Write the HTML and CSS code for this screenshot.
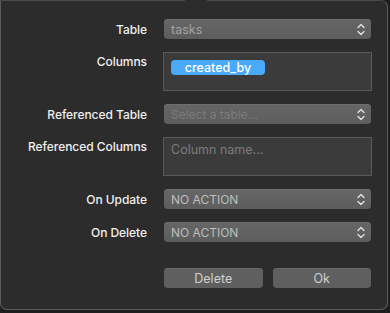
FILE: index.html
```html
<!DOCTYPE html>
<html>
<head>
<meta charset="utf-8">
<link rel="stylesheet" href="styles.css">
</head>
<body>
<div class="popover">
  <div class="arrow"></div>
  <div class="form">
    <div class="label">Table</div>
    <div class="select"><span class="value dim">tasks</span><svg class="chev" width="8" height="13" viewBox="0 0 8 13"><path d="M1 4.5 L4 1.5 L7 4.5 M1 8.5 L4 11.5 L7 8.5" fill="none" stroke="#e6e6e6" stroke-width="1.3" stroke-linecap="round" stroke-linejoin="round"/></svg></div>

    <div class="label top">Columns</div>
    <div class="box"><span class="token">created_by</span></div>

    <div class="label">Referenced Table</div>
    <div class="select"><span class="value placeholder">Select a table...</span><svg class="chev" width="8" height="13" viewBox="0 0 8 13"><path d="M1 4.5 L4 1.5 L7 4.5 M1 8.5 L4 11.5 L7 8.5" fill="none" stroke="#e6e6e6" stroke-width="1.3" stroke-linecap="round" stroke-linejoin="round"/></svg></div>

    <div class="label top">Referenced Columns</div>
    <div class="box"><span class="placeholder-text">Column name...</span></div>

    <div class="label">On Update</div>
    <div class="select"><span class="value">NO ACTION</span><svg class="chev" width="8" height="13" viewBox="0 0 8 13"><path d="M1 4.5 L4 1.5 L7 4.5 M1 8.5 L4 11.5 L7 8.5" fill="none" stroke="#e6e6e6" stroke-width="1.3" stroke-linecap="round" stroke-linejoin="round"/></svg></div>

    <div class="label">On Delete</div>
    <div class="select"><span class="value">NO ACTION</span><svg class="chev" width="8" height="13" viewBox="0 0 8 13"><path d="M1 4.5 L4 1.5 L7 4.5 M1 8.5 L4 11.5 L7 8.5" fill="none" stroke="#e6e6e6" stroke-width="1.3" stroke-linecap="round" stroke-linejoin="round"/></svg></div>

    <div class="buttons">
      <button class="btn">Delete</button>
      <button class="btn">Ok</button>
    </div>
  </div>
</div>
</body>
</html>
```
FILE: styles.css
```css
html, body {
  margin: 0;
  padding: 0;
  background: #1e1e1e;
  width: 390px;
  height: 313px;
  overflow: hidden;
  font-family: Inter, "Liberation Sans", sans-serif;
}
.popover {
  position: relative;
  box-sizing: border-box;
  width: 388px;
  height: 310px;
  background: #2c2c2c;
  border: 1px solid #5c5c5c;
  border-top-color: #4a4a4a;
  border-radius: 0 7px 7px 7px;
  padding: 18px 0 0 0;
}
.arrow {
  position: absolute;
  top: -1px;
  left: 184px;
  width: 22px;
  height: 1px;
  background: #2c2c2c;
}
.form {
  display: grid;
  grid-template-columns: 146px 207px;
  column-gap: 17px;
  row-gap: 13px;
  align-items: center;
}
.label {
  text-align: right;
  color: #f0f0f0;
  font-size: 12px;
  font-weight: 500;
  letter-spacing: -0.05px;
}
.label.top {
  align-self: start;
  padding-top: 2px;
}
.select {
  box-sizing: border-box;
  height: 20px;
  border-radius: 4px;
  background: linear-gradient(#666666, #5d5d5d);
  display: flex;
  align-items: center;
  justify-content: space-between;
  padding: 0 6px 0 7px;
  box-shadow: inset 0 0.5px 0 #747474;
}
.value {
  font-size: 12px;
  color: #bdbdbd;
}
.value.dim {
  color: #a3a3a3;
  font-size: 12.5px;
}
.value.placeholder {
  color: #7c7c7c;
}
.chev {
  display: block;
}
.box {
  box-sizing: border-box;
  height: 39px;
  background: #3b3b3b;
  border: 1px solid #595959;
  margin-left: -1px;
  margin-right: -1px;
  padding: 3px 7px;
}
.token {
  display: inline-block;
  width: 94px;
  height: 15px;
  line-height: 15px;
  border-radius: 4px;
  background: #4ba9f9;
  color: #ffffff;
  font-size: 12.5px;
  font-weight: 500;
  text-align: center;
}
.placeholder-text {
  display: block;
  color: #7c7c7c;
  font-size: 12.5px;
  padding-top: 1px;
}
.buttons {
  grid-column: 2;
  display: flex;
  gap: 10px;
  margin-top: 13px;
}
.btn {
  flex: 1;
  height: 20px;
  border: none;
  border-radius: 4px;
  background: #5f5f5f;
  color: #cfcfcf;
  font-family: Inter, "Liberation Sans", sans-serif;
  font-size: 12.5px;
  padding: 0;
  box-shadow: inset 0 0.5px 0 #6e6e6e;
}
```
